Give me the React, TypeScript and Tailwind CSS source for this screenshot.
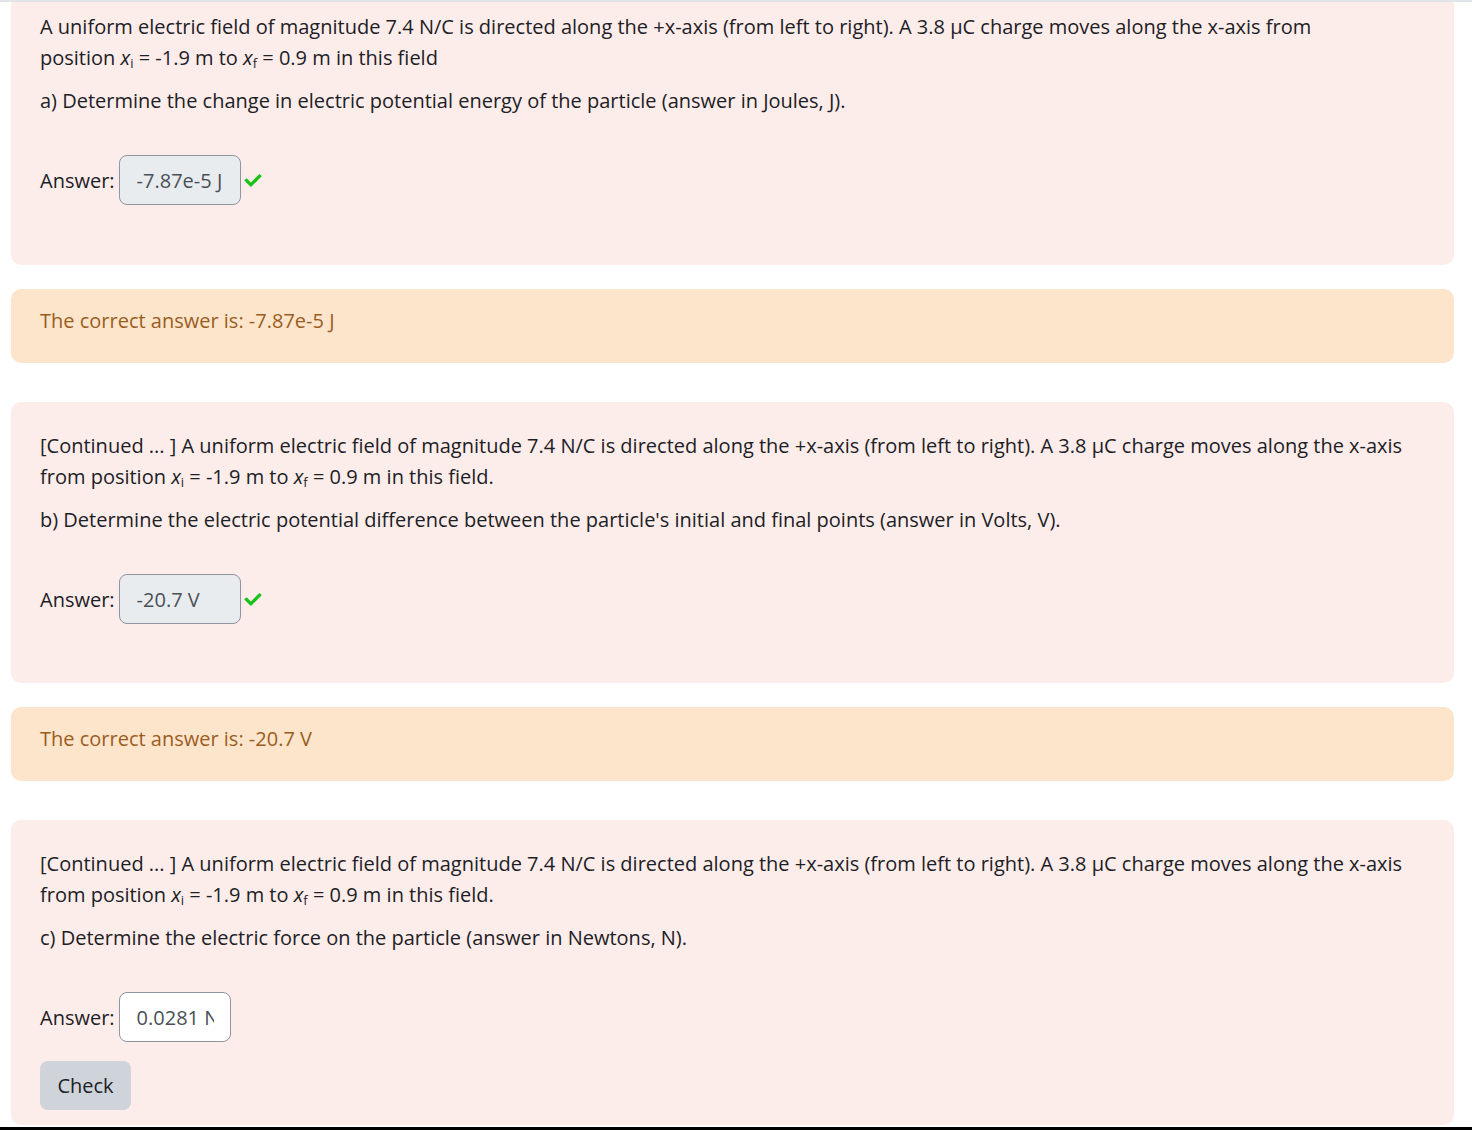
import React from 'react';

const Check = () => (
  <svg viewBox="0 0 512 512" className="w-[20px] h-[17px] ml-[2px]" fill="#1cc21c">
    <path d="M173.898 439.404l-166.4-166.4c-9.997-9.997-9.997-26.206 0-36.204l36.203-36.204c9.997-9.998 26.207-9.998 36.204 0L192 312.69 432.095 72.596c9.997-9.997 26.207-9.997 36.204 0l36.203 36.204c9.997 9.997 9.997 26.206 0 36.204l-294.4 294.401c-9.998 9.997-26.207 9.997-36.204-.001z" />
  </svg>
);

const Pos = ({ end = '' }: { end?: string }) => (
  <>
    from position <i>x</i>
    <sub className="text-[13px]">i</sub> = -1.9 m to <i>x</i>
    <sub className="text-[13px]">f</sub> = 0.9 m in this field{end}
  </>
);

const AnswerRow = ({ value, correct }: { value: string; correct: boolean }) => (
  <div className="flex items-center">
    <span className="mr-[4px]">Answer:</span>
    <input
      readOnly
      value={value}
      className={`h-[50px] rounded-[8px] border border-[#8f959e] pl-[17px] pr-[16px] text-[#495057] outline-none ${
        correct ? 'w-[122px] bg-[#e9ecef]' : 'w-[112px] bg-white'
      }`}
    />
    {correct && <Check />}
  </div>
);

const Outcome = ({ text }: { text: string }) => (
  <div className="rounded-[10px] bg-[#fde5cc] px-[29px] pt-[16px] pb-[27px] text-[#9a5d1e]">
    The correct answer is: {text}
  </div>
);

export default function App() {
  return (
    <div
      className="w-[1472px] h-[1130px] overflow-hidden bg-white flex flex-col text-[20px] leading-[31px] text-[#1d2125]"
      style={{ fontFamily: '"Open Sans", "Noto Sans", sans-serif' }}
    >
      <div className="h-[2px] bg-[#e1e4e8] shrink-0" />
      <div className="w-[1443px] ml-[11px] flex flex-col shrink-0">
        {/* part a */}
        <div className="rounded-b-[10px] bg-[#fcedeb] px-[29px] pt-[9px] pb-[60px]">
          <p className="whitespace-nowrap">
            A uniform electric field of magnitude 7.4 N/C is directed along the +x-axis (from left to right). A 3.8 μC charge moves along the x-axis from
            <br />
            <span>
              position <i>x</i>
              <sub className="text-[13px]">i</sub> = -1.9 m to <i>x</i>
              <sub className="text-[13px]">f</sub> = 0.9 m in this field
            </span>
          </p>
          <p className="mt-[12px] mb-[39px]">a) Determine the change in electric potential energy of the particle (answer in Joules, J).</p>
          <AnswerRow value="-7.87e-5 J" correct />
        </div>
        <div className="mt-[24px]">
          <Outcome text="-7.87e-5 J" />
        </div>

        {/* part b */}
        <div className="mt-[39px] rounded-[10px] bg-[#fcedeb] px-[29px] pt-[28px] pb-[59px]">
          <p className="whitespace-nowrap">
            [Continued ... ] A uniform electric field of magnitude 7.4 N/C is directed along the +x-axis (from left to right). A 3.8 μC charge moves along the x-axis
            <br />
            <Pos end="." />
          </p>
          <p className="mt-[12px] mb-[39px]">
            b) Determine the electric potential difference between the particle's initial and final points (answer in Volts, V).
          </p>
          <AnswerRow value="-20.7 V" correct />
        </div>
        <div className="mt-[24px]">
          <Outcome text="-20.7 V" />
        </div>

        {/* part c */}
        <div className="mt-[39px] rounded-[10px] bg-[#fcedeb] px-[29px] pt-[28px] pb-[15px]">
          <p className="whitespace-nowrap">
            [Continued ... ] A uniform electric field of magnitude 7.4 N/C is directed along the +x-axis (from left to right). A 3.8 μC charge moves along the x-axis
            <br />
            <Pos end="." />
          </p>
          <p className="mt-[12px] mb-[39px]">c) Determine the electric force on the particle (answer in Newtons, N).</p>
          <AnswerRow value="0.0281 N" correct={false} />
          <button className="mt-[19px] h-[49px] w-[91px] rounded-[8px] bg-[#ced4da] text-[#1d2125]">Check</button>
        </div>
      </div>
      <div className="mt-auto h-[3px] bg-black shrink-0" />
    </div>
  );
}
